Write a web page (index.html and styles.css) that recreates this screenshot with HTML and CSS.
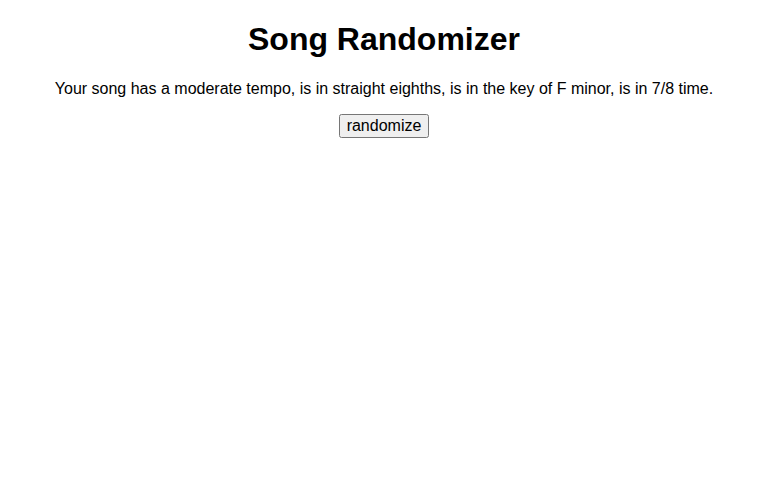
FILE: index.html
```html
<!DOCTYPE html>
<html lang="en">
<head>
  <meta charset="UTF-8" />
  <meta name="viewport" content="width=device-width, initial-scale=1.0" />
  <title>Song Randomizer</title>
  <link rel="stylesheet" href="styles.css">
</head>
<body>
  <h1>Song Randomizer</h1>
  <p id="song">Your song has a moderate tempo, is in straight eighths, is in the key of F minor, is in 7/8 time.</p>
  <button class="randomize">randomize</button>
</body>
</html>
```

FILE: styles.css
```css
body {
  font-family: "Liberation Sans", Arial, sans-serif;
  text-align: center;
  color: #000;
  background: #fff;
  margin: 0 8px;
}
h1 {
  font-size: 32px;
}
p {
  font-size: 16px;
}
.randomize {
  font-family: "Liberation Sans", Arial, sans-serif;
  font-size: 16px;
}
```
